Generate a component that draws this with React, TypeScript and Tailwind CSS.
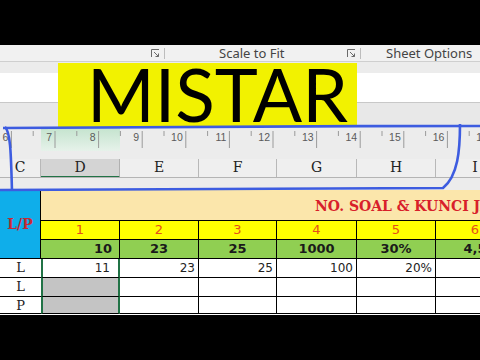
import React from "react";

const COLS = "grid grid-cols-[41px_79px_79px_78px_80px_79px_79px]";

function Launcher() {
  return (
    <svg width="9" height="9" viewBox="0 0 9 9" className="shrink-0">
      <path d="M0.5 8 V0.5 H8" stroke="#6a6a6a" strokeWidth="1" fill="none" />
      <path d="M3 3 L7.5 7.5 M7.5 4.5 V7.5 H4.5" stroke="#6a6a6a" strokeWidth="1" fill="none" />
    </svg>
  );
}

function Ribbon() {
  return (
    <div className="h-[16px] shrink-0 bg-[#f1f1f1] flex items-center text-[13px] leading-[16px] text-[#444]" style={{ fontFamily: '"Noto Sans", "Open Sans", sans-serif' }}>
      <div className="w-[151px] shrink-0" />
      <Launcher />
      <div className="ml-[4px] w-px h-[11px] bg-[#bdbdbd] shrink-0" />
      <div className="ml-[54px] w-[128px] shrink-0 whitespace-nowrap">Scale to Fit</div>
      <Launcher />
      <div className="ml-[4px] w-px h-[11px] bg-[#bdbdbd] shrink-0" />
      <div className="ml-[25px] whitespace-nowrap">Sheet Options</div>
    </div>
  );
}

function Ruler() {
  const nums = [6, 7, 8, 9, 10, 11, 12, 13, 14, 15, 16, 17];
  const step = 43.6;
  return (
    <div className="h-[32px] shrink-0 bg-[#ececec] relative">
      <div className="absolute left-[41px] top-0 w-[79px] h-[24px] bg-gradient-to-b from-[#c3e3cd] to-[#e6f2ea]" />
      <svg width="480" height="32" className="absolute left-0 top-0">
        {nums.map((n) => {
          const x = 55 + (n - 7) * step;
          return (
            <g key={n}>
              <line x1={x} y1={4} x2={x} y2={21} stroke="#9a9a9a" strokeWidth="1" />
              <line x1={x - step / 2} y1={4} x2={x - step / 2} y2={9} stroke="#9a9a9a" strokeWidth="1" />
              <text x={x - 3} y={14} textAnchor="end" fontSize="10.5" fill="#5a5a5a" fontFamily="'Liberation Sans', sans-serif">{n}</text>
            </g>
          );
        })}
      </svg>
    </div>
  );
}

function Header() {
  const letters = ["C", "D", "E", "F", "G", "H", "I"];
  return (
    <div className={`${COLS} h-[18px] shrink-0 bg-[#efefef] text-[14px] leading-[17px] text-[#222]`} style={{ fontFamily: '"DejaVu Serif", serif' }}>
      {letters.map((l) => (
        <div
          key={l}
          className={
            l === "D"
              ? "bg-[#d4d4d4] border-b-2 border-[#217346] border-r border-r-[#b0b0b0] text-center"
              : "border-r border-[#b8b8b8] text-center"
          }
        >
          {l}
        </div>
      ))}
    </div>
  );
}

function Table() {
  const nums = ["1", "2", "3", "4", "5", "6"];
  const keys = ["10", "23", "25", "1000", "30%", "4,5"];
  const vals = ["11", "23", "25", "100", "20%", ""];
  const serif = { fontFamily: '"DejaVu Serif", serif' };
  const sans = { fontFamily: '"DejaVu Sans", sans-serif' };
  return (
    <div className={`${COLS} grid-rows-[31px_19px_19px_19px_19px_17px] h-[125px] w-[515px] shrink-0 bg-white`}>
      <div className="row-span-3 bg-[#0faeea] border-r border-b border-black flex items-center justify-center text-[14px] font-bold text-[#c42a35]" style={serif}>
        L/P
      </div>
      <div className="col-span-6 bg-[#fbe6ab] border-b border-black relative overflow-hidden">
        <div className="absolute left-[274px] top-[6px] whitespace-nowrap text-[14px] font-bold text-[#d8202a]" style={serif}>
          NO. SOAL &amp; KUNCI JAWABAN
        </div>
      </div>
      {nums.map((n) => (
        <div key={"n" + n} className="bg-[#ffff00] border-r border-b border-black text-center text-[13px] leading-[18px] text-[#e5501a]" style={sans}>
          {n}
        </div>
      ))}
      {keys.map((k, i) => (
        <div
          key={"k" + i}
          className={`bg-[#90cf52] border-r border-b border-black text-[13px] leading-[18px] font-bold text-[#1a1a1a] ${i === 0 ? "text-right pr-[7px]" : "text-center"}`}
          style={sans}
        >
          {k}
        </div>
      ))}
      {["L", "L", "P"].map((r, ri) => (
        <React.Fragment key={"r" + ri}>
          <div className="border-b border-black text-center text-[13px] leading-[18px] text-[#222]" style={serif}>
            {r}
          </div>
          {vals.map((v, ci) => (
            <div
              key={ci}
              className={`border-b border-black text-right text-[12px] leading-[18px] text-[#222] ${
                ci === 0
                  ? `border-x-2 border-x-[#217346] pr-[8px] ${ri > 0 ? "bg-[#c4c4c4]" : ""}`
                  : "border-r pr-[3px]"
              }`}
              style={sans}
            >
              {ri === 0 ? v : ""}
            </div>
          ))}
        </React.Fragment>
      ))}
    </div>
  );
}

export default function App() {
  return (
    <div className="relative w-[480px] h-[360px] bg-black overflow-hidden flex flex-col">
      <div className="h-[45px] shrink-0" />
      <Ribbon />
      <div className="h-px shrink-0 bg-[#cfcfcf]" />
      <div className="h-[11px] shrink-0 bg-[#ececec]" />
      <div className="h-[30px] shrink-0 bg-white border-b border-[#c8c8c8]" />
      <div className="h-[24px] shrink-0 bg-[#e8e8e8]" />
      <Ruler />
      <Header />
      <div className="h-[13px] shrink-0 bg-[#ececec] border-t border-[#b4b4b4]" />
      <Table />
      <div className="flex-1" />

      <div className="absolute left-[58px] top-[63px] w-[299px] h-[64px] bg-[#f2f200] overflow-hidden">
        <div className="absolute left-[29px] top-[-1px] h-[64px] text-[73px] leading-[64px] text-black whitespace-nowrap" style={{ fontFamily: 'Lato, "Open Sans", sans-serif' }}>
          MISTAR
        </div>
      </div>

      <svg width="480" height="360" className="absolute left-0 top-0 pointer-events-none">
        <path d="M3 128 C 80 127, 300 126, 480 126" stroke="#3d5ce0" strokeWidth="2.6" fill="none" />
        <path d="M5 127 C 11 132, 11 160, 12 191" stroke="#3d5ce0" strokeWidth="2.6" fill="none" />
        <path d="M460 124 C 460 150, 458 176, 443 188 C 300 189, 100 189, 0 190" stroke="#3d5ce0" strokeWidth="2.6" fill="none" />
      </svg>
    </div>
  );
}
